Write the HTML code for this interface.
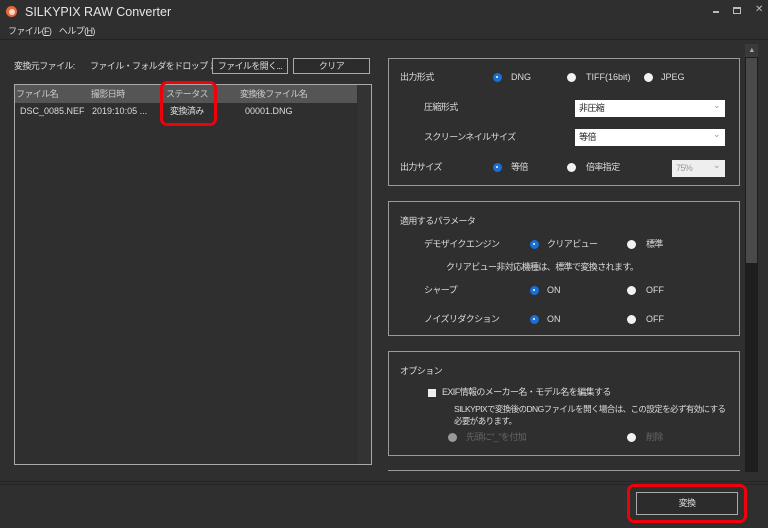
<!DOCTYPE html>
<html><head><meta charset="utf-8"><style>
*{margin:0;padding:0;box-sizing:border-box}
body{width:768px;height:528px;background:#2f2f2f;font-family:"Liberation Sans","Noto Sans CJK JP",sans-serif;color:#ddd;font-size:9px;letter-spacing:-0.6px;line-height:11px;position:relative;overflow:hidden}
.a{position:absolute;white-space:nowrap}
.l{letter-spacing:0}
.box{position:absolute;border:1px solid #9a9a9a}
.btn{position:absolute;border:1px solid #aaa;background:#2c2c2c;text-align:center;color:#ddd;white-space:nowrap}
.r{position:absolute;width:9px;height:9px;border-radius:50%;background:#f2f2f2}
.r.on{background:#1a6fd6;border:2.5px solid #1a6fd6}
.r.on::after{content:"";position:absolute;left:1px;top:1px;width:2px;height:2px;border-radius:50%;background:#fff}
.sel{position:absolute;background:#fff;color:#222;padding-left:4px;line-height:17px;height:17px}
.sel::after{content:"⌄";position:absolute;right:5px;top:-3px;color:#999;font-size:9px}
.red{position:absolute;border:3px solid #f0000a;border-radius:7px}
</style></head><body>
<div class="a" style="left:6px;top:6px;width:11px;height:11px;border-radius:50%;background:#e56a3a"></div>
<div class="a" style="left:8.5px;top:8.5px;width:6px;height:6px;border-radius:50%;background:#fbd7c6"></div>
<div class="a l" style="left:25px;top:5px;font-size:12.5px;line-height:14px;color:#e6e6e6">SILKYPIX RAW Converter</div>
<div class="a" style="left:713px;top:11px;width:6px;height:1.5px;background:#bbb"></div>
<div class="a" style="left:733px;top:7px;width:8px;height:7px;border:1px solid #bbb;border-top-width:2px"></div>
<div class="a" style="left:755px;top:4px;font-size:10px;color:#bbb">✕</div>
<div class="a" style="left:8px;top:26px">ファイル(<u>F</u>)&nbsp;&nbsp;&nbsp;&nbsp;ヘルプ(<u>H</u>)</div>
<div class="a" style="left:0;top:39px;width:768px;height:1px;background:#222"></div>
<div class="a" style="left:14px;top:61px">変換元ファイル:</div>
<div class="a" style="left:90px;top:61px">ファイル・フォルダをドロップ または</div>
<div class="btn" style="left:212px;top:58px;width:76px;height:16px;line-height:14px">ファイルを開く...</div>
<div class="btn" style="left:293px;top:58px;width:77px;height:16px;line-height:14px">クリア</div>
<div class="box" style="left:14px;top:84px;width:358px;height:381px;background:#2f2f2f;border-color:#aaa"></div>
<div class="a" style="left:15px;top:85px;width:342px;height:18px;background:#555"></div>
<div class="a" style="left:358px;top:85px;width:13px;height:379px;background:#333"></div>
<div class="a" style="left:16px;top:89px;color:#ccc">ファイル名</div>
<div class="a" style="left:91px;top:89px;color:#ccc">撮影日時</div>
<div class="a" style="left:166px;top:89px;color:#ccc">ステータス</div>
<div class="a" style="left:240px;top:89px;color:#ccc">変換後ファイル名</div>
<div class="a l" style="left:20px;top:106px">DSC_0085.NEF&nbsp;&nbsp;&nbsp;2019:10:05 ...</div>
<div class="a" style="left:170px;top:106px">変換済み</div>
<div class="a l" style="left:245px;top:106px">00001.DNG</div>
<div class="red" style="left:160px;top:81px;width:57px;height:45px"></div>
<div class="box" style="left:388px;top:58px;width:352px;height:128px"></div>
<div class="a" style="left:400px;top:72px">出力形式</div>
<div class="r on" style="left:493px;top:73px"></div><div class="a l" style="left:511px;top:72px">DNG</div>
<div class="r" style="left:567px;top:73px"></div><div class="a l" style="left:586px;top:72px">TIFF(16bit)</div>
<div class="r" style="left:644px;top:73px"></div><div class="a l" style="left:661px;top:72px">JPEG</div>
<div class="a" style="left:424px;top:102px">圧縮形式</div>
<div class="sel" style="left:575px;top:100px;width:150px">非圧縮</div>
<div class="a" style="left:424px;top:132px">スクリーンネイルサイズ</div>
<div class="sel" style="left:575px;top:129px;width:150px">等倍</div>
<div class="a" style="left:400px;top:162px">出力サイズ</div>
<div class="r on" style="left:493px;top:163px"></div><div class="a" style="left:511px;top:162px">等倍</div>
<div class="r" style="left:567px;top:163px"></div><div class="a" style="left:586px;top:162px">倍率指定</div>
<div class="sel" style="left:672px;top:160px;width:53px;background:#eee;color:#999">75%</div>
<div class="box" style="left:388px;top:201px;width:352px;height:135px"></div>
<div class="a" style="left:400px;top:216px">適用するパラメータ</div>
<div class="a" style="left:424px;top:239px">デモザイクエンジン</div>
<div class="r on" style="left:530px;top:240px"></div><div class="a" style="left:547px;top:239px">クリアビュー</div>
<div class="r" style="left:627px;top:240px"></div><div class="a" style="left:646px;top:239px">標準</div>
<div class="a" style="left:446px;top:262px">クリアビュー非対応機種は、標準で変換されます。</div>
<div class="a" style="left:424px;top:285px">シャープ</div>
<div class="r on" style="left:530px;top:286px"></div><div class="a l" style="left:547px;top:285px">ON</div>
<div class="r" style="left:627px;top:286px"></div><div class="a l" style="left:646px;top:285px">OFF</div>
<div class="a" style="left:424px;top:314px">ノイズリダクション</div>
<div class="r on" style="left:530px;top:315px"></div><div class="a l" style="left:547px;top:314px">ON</div>
<div class="r" style="left:627px;top:315px"></div><div class="a l" style="left:646px;top:314px">OFF</div>
<div class="box" style="left:388px;top:351px;width:352px;height:105px"></div>
<div class="a" style="left:400px;top:366px">オプション</div>
<div class="a" style="left:428px;top:389px;width:8px;height:8px;background:#eee"></div>
<div class="a" style="left:442px;top:387px">EXIF情報のメーカー名・モデル名を編集する</div>
<div class="a" style="left:454px;top:403px;line-height:12px;font-size:8.5px">SILKYPIXで変換後のDNGファイルを開く場合は、この設定を必ず有効にする<br>必要があります。</div>
<div class="r" style="left:448px;top:433px;background:#999"></div><div class="a" style="left:466px;top:432px;color:#666">先頭に"_"を付加</div>
<div class="r" style="left:627px;top:433px"></div><div class="a" style="left:646px;top:432px;color:#666">削除</div>
<div class="a" style="left:388px;top:470px;width:352px;height:1px;background:#9a9a9a"></div>
<div class="a" style="left:745px;top:44px;width:13px;height:428px;background:#1e1e1e"></div>
<div class="a" style="left:746px;top:58px;width:11px;height:205px;background:#4a4a4a"></div>
<div class="a" style="left:745px;top:44px;width:13px;height:13px;background:#3a3a3a;color:#aaa;font-size:7px;text-align:center;line-height:13px">▲</div>
<div class="a" style="left:0;top:481px;width:768px;height:1px;background:#252525"></div>
<div class="a" style="left:0;top:484px;width:768px;height:1px;background:#252525"></div>
<div class="btn" style="left:636px;top:492px;width:102px;height:23px;line-height:21px">変換</div>
<div class="red" style="left:627px;top:484px;width:120px;height:39px"></div>
</body></html>
